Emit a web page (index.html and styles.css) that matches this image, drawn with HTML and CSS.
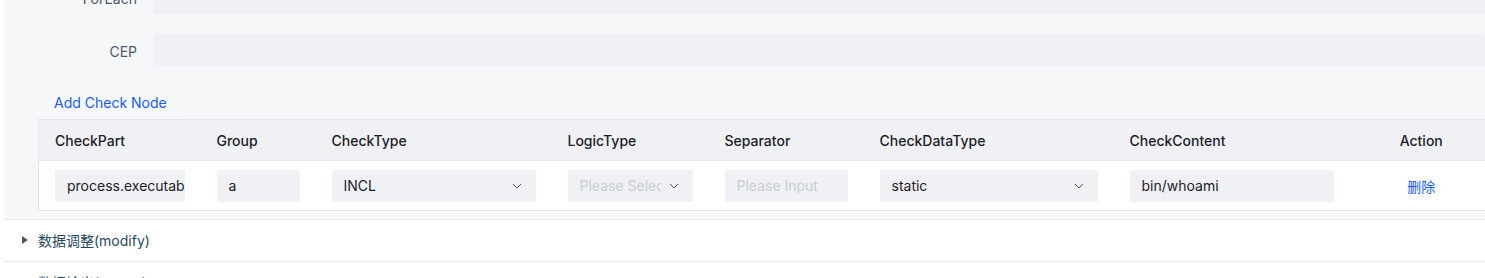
FILE: index.html
```html
<!DOCTYPE html>
<html lang="en">
<head>
    <meta charset="UTF-8">
    <meta name="viewport" content="width=device-width, initial-scale=1.0">
    <title>Rule Editor</title>
    <link rel="stylesheet" href="styles.css">
</head>
<body>
    <div class="panel">
        <div class="form-row">
            <div class="form-label">ForEach</div>
            <div class="form-input"></div>
        </div>
        <div class="form-row">
            <div class="form-label">CEP</div>
            <div class="form-input"></div>
        </div>

        <div class="add-button">Add Check Node</div>

        <div class="table-box">
            <table>
                <colgroup>
                    <col style="width:162px">
                    <col style="width:115px">
                    <col style="width:236px">
                    <col style="width:157px">
                    <col style="width:155px">
                    <col style="width:250px">
                    <col style="width:236px">
                    <col style="width:144px">
                </colgroup>
                <tr>
                    <th>CheckPart</th>
                    <th>Group</th>
                    <th>CheckType</th>
                    <th>LogicType</th>
                    <th>Separator</th>
                    <th>CheckDataType</th>
                    <th>CheckContent</th>
                    <th class="center">Action</th>
                </tr>
                <tr>
                    <td><div class="field">process.executable</div></td>
                    <td><div class="field">a</div></td>
                    <td>
                        <div class="field select">
                            <span class="value">INCL</span>
                            <svg class="arrow" width="10" height="6" viewBox="0 0 10 6"><polyline points="1,1 5,5 9,1" fill="none" stroke="#4e5969" stroke-width="1"/></svg>
                        </div>
                    </td>
                    <td>
                        <div class="field select">
                            <span class="value placeholder">Please Select</span>
                            <svg class="arrow" width="10" height="6" viewBox="0 0 10 6"><polyline points="1,1 5,5 9,1" fill="none" stroke="#4e5969" stroke-width="1"/></svg>
                        </div>
                    </td>
                    <td><div class="field placeholder">Please Input</div></td>
                    <td>
                        <div class="field select">
                            <span class="value">static</span>
                            <svg class="arrow" width="10" height="6" viewBox="0 0 10 6"><polyline points="1,1 5,5 9,1" fill="none" stroke="#4e5969" stroke-width="1"/></svg>
                        </div>
                    </td>
                    <td><div class="field">bin/whoami</div></td>
                    <td class="center"><span class="link">删除</span></td>
                </tr>
            </table>
        </div>
    </div>

    <div class="section"><span class="caret"></span>数据调整(modify)</div>
    <div class="section">数据输出(output)</div>
</body>
</html>
```

FILE: styles.css
```css
body {
    margin: 0;
    font-family: Inter, "Noto Sans CJK SC", sans-serif;
    font-size: 14px;
    color: #1d2129;
    background: #ffffff;
    overflow: hidden;
}
.panel {
    margin-left: 4px;
    margin-top: -18px;
    background: #f6f7f9;
    border-bottom: 1px solid #e5e6eb;
    padding-bottom: 8px;
}
.form-row {
    display: flex;
    align-items: center;
    height: 32px;
    margin-bottom: 21px;
}
.form-row + .form-row {
    margin-bottom: 20px;
}
.form-label {
    width: 133px;
    text-align: right;
    color: #4e5969;
    margin-right: 16px;
}
.form-input {
    flex: 1;
    height: 32px;
    background: #f0f1f5;
    border-radius: 2px;
}
.add-button {
    display: inline-block;
    margin-left: 34px;
    height: 32px;
    line-height: 32px;
    padding: 0 16px;
    white-space: nowrap;
    color: #165dff;
    background: #f7f8fa;
    vertical-align: top;
}
.table-box {
    margin-left: 34px;
    width: 1455px;
}
table {
    border-collapse: collapse;
    table-layout: fixed;
    width: 1455px;
    background: #ffffff;
    border: 1px solid #e5e6eb;
}
th {
    height: 40px;
    padding: 0 16px;
    text-align: left;
    font-weight: 500;
    background: #f0f1f5;
    border-bottom: 1px solid #e5e6eb;
    color: #1d2129;
}
td {
    height: 49px;
    padding: 0 16px;
}
.center {
    text-align: center;
}
.field {
    height: 32px;
    line-height: 32px;
    padding: 0 12px;
    background: #f0f1f5;
    border-radius: 2px;
    white-space: nowrap;
    overflow: hidden;
    color: #1d2129;
}
.placeholder {
    color: #c9cdd4;
}
.select {
    display: flex;
    align-items: center;
    padding-right: 14px;
}
.select .value {
    flex: 1;
    overflow: hidden;
    white-space: nowrap;
}
.select .arrow {
    margin-left: 8px;
    flex: none;
}
.link {
    color: #165dff;
}
.section {
    margin-left: 4px;
    height: 41px;
    line-height: 41px;
    padding-left: 34px;
    border-bottom: 1px solid #e5e6eb;
    color: #1f4a5c;
    position: relative;
}
.caret {
    position: absolute;
    left: 18px;
    top: 16px;
    width: 0;
    height: 0;
    border-top: 4px solid transparent;
    border-bottom: 4px solid transparent;
    border-left: 6px solid #4e5969;
}
```
